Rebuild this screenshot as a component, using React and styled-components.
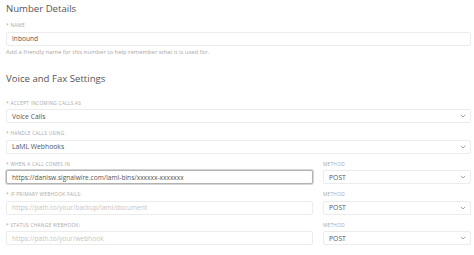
import React from "react";
import styled, { createGlobalStyle } from "styled-components";

const GlobalStyle = createGlobalStyle`
  html, body {
    margin: 0;
    padding: 0;
    background: #fff;
  }
  body {
    font-family: "Open Sans", "Liberation Sans", sans-serif;
    color: #444;
  }
`;

const Chevron = () => (
  <svg width="6" height="4" viewBox="0 0 6 4">
    <polyline points="0.8,0.8 3,3 5.2,0.8" fill="none" stroke="#9a9a9a" strokeWidth="0.9" />
  </svg>
);

const App = () => {
  return (
    <>
      <GlobalStyle />
      <Page>
        <SectionTitle>Number Details</SectionTitle>
        <Field $first>
          <Label>* Name</Label>
          <Input defaultValue="Inbound" spellCheck={false} autoComplete="off" />
          <Helper>Add a friendly name for this number to help remember what it is used for.</Helper>
        </Field>

        <SectionTitle $spaced>Voice and Fax Settings</SectionTitle>
        <Field $first $top={11}>
          <Label>* Accept incoming calls as</Label>
          <Select>
            <span>Voice Calls</span>
            <Chevron />
          </Select>
        </Field>
        <Field>
          <Label>* Handle calls using</Label>
          <Select>
            <span>LaML Webhooks</span>
            <Chevron />
          </Select>
        </Field>

        <Row>
          <Field>
            <Label>* When a call comes in</Label>
            <Input
              $focused
              spellCheck={false}
              autoComplete="off"
              defaultValue="https://danisw.signalwire.com/laml-bins/xxxxxx-xxxxxxx"
            />
          </Field>
          <Field>
            <Label>Method</Label>
            <Select>
              <span>POST</span>
              <Chevron />
            </Select>
          </Field>
        </Row>
        <Row>
          <Field>
            <Label>* If primary webhook fails:</Label>
            <Input placeholder="https://path.to/your/backup/laml/document" />
          </Field>
          <Field>
            <Label>Method</Label>
            <Select>
              <span>POST</span>
              <Chevron />
            </Select>
          </Field>
        </Row>
        <Row>
          <Field>
            <Label>* Status change webhook:</Label>
            <Input placeholder="https://path.to/your/webhook" />
          </Field>
          <Field>
            <Label>Method</Label>
            <Select>
              <span>POST</span>
              <Chevron />
            </Select>
          </Field>
        </Row>
      </Page>
    </>
  );
};

export default App;

const Page = styled.div`
  display: flex;
  flex-direction: column;
  padding: 0 3px 0 6px;
  width: 474px;
  height: 255px;
  box-sizing: border-box;
  overflow: hidden;
`;

const SectionTitle = styled.h2`
  margin: ${(p) => (p.$spaced ? "14px" : "0")} 0 0;
  font-size: 9.6px;
  font-weight: 400;
  line-height: 18px;
  color: #555;
`;

const Field = styled.div`
  display: flex;
  flex-direction: column;
  margin-top: ${(p) => (p.$top != null ? p.$top : p.$first ? 3 : 6)}px;
  min-width: 0;
`;

const Row = styled.div`
  display: grid;
  grid-template-columns: minmax(0, 1fr) 148px;
  column-gap: 10px;

  & > ${Field} {
    margin-top: 6px;
  }
`;

const Label = styled.label`
  display: block;
  font-size: 4.8px;
  line-height: 8px;
  letter-spacing: 0.25px;
  text-transform: uppercase;
  color: #a8a8a8;
  margin-bottom: 2.5px;
  white-space: nowrap;
`;

const Input = styled.input`
  box-sizing: border-box;
  height: 14px;
  width: 100%;
  padding: 0 5px;
  font-family: "Open Sans", "Liberation Sans", sans-serif;
  font-size: 6.6px;
  color: #555;
  background: #fff;
  border: 1px solid ${(p) => (p.$focused ? "#b3b3b3" : "#ececec")};
  border-radius: 2px;
  outline: none;
  box-shadow: ${(p) => (p.$focused ? "0 0 0 1px #d6d6d6" : "none")};

  &::placeholder {
    color: #c6c6c6;
  }
`;

const Select = styled.div`
  box-sizing: border-box;
  height: 14px;
  display: flex;
  align-items: center;
  justify-content: space-between;
  padding: 0 4px 0 5px;
  font-size: 6.8px;
  color: #555;
  border: 1px solid #ececec;
  border-radius: 2px;
  background: #fff;
`;

const Helper = styled.div`
  margin-top: 2px;
  font-size: 5.9px;
  line-height: 8px;
  color: #a8a8a8;
  white-space: nowrap;
`;
